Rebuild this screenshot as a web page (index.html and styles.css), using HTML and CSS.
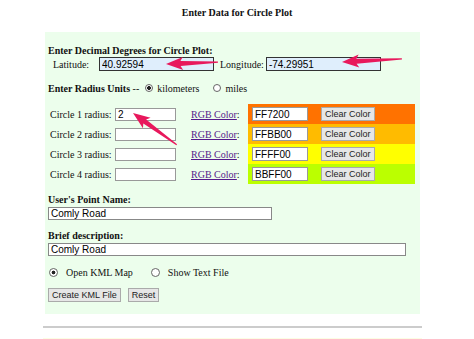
FILE: index.html
```
<!DOCTYPE html>
<html lang="en">
<head>
    <meta charset="UTF-8">
    <title>Enter Data for Circle Plot</title>
    <link rel="stylesheet" href="styles.css">
</head>
<body>
    <h1 class="title">Enter Data for Circle Plot</h1>

    <form class="panel">
        <div class="heading">Enter Decimal Degrees for Circle Plot:</div>
        <div class="coords">
            <label class="lat-label">Latitude:</label>
            <input type="text" class="coord-input" value="40.92594">
            <label class="lon-label">Longitude:</label>
            <input type="text" class="coord-input" value="-74.29951">
        </div>

        <div class="units">
            <span><b>Enter Radius Units</b> --</span>
            <input type="radio" name="units" class="radio" checked>
            <span>kilometers</span>
            <input type="radio" name="units" class="radio miles">
            <span>miles</span>
        </div>

        <div class="circles">
            <span class="circle-label">Circle 1 radius:</span>
            <input type="text" class="radius-input" value="2">
            <span><a href="#" class="rgb-link">RGB Color</a>:</span>
            <div class="color-cell" style="background:#FF7200">
                <input type="text" class="color-input" value="FF7200">
                <button type="button" class="btn">Clear Color</button>
            </div>

            <span class="circle-label">Circle 2 radius:</span>
            <input type="text" class="radius-input">
            <span><a href="#" class="rgb-link">RGB Color</a>:</span>
            <div class="color-cell" style="background:#FFBB00">
                <input type="text" class="color-input" value="FFBB00">
                <button type="button" class="btn">Clear Color</button>
            </div>

            <span class="circle-label">Circle 3 radius:</span>
            <input type="text" class="radius-input">
            <span><a href="#" class="rgb-link">RGB Color</a>:</span>
            <div class="color-cell" style="background:#FFFF00">
                <input type="text" class="color-input" value="FFFF00">
                <button type="button" class="btn">Clear Color</button>
            </div>

            <span class="circle-label">Circle 4 radius:</span>
            <input type="text" class="radius-input">
            <span><a href="#" class="rgb-link">RGB Color</a>:</span>
            <div class="color-cell" style="background:#BBFF00">
                <input type="text" class="color-input" value="BBFF00">
                <button type="button" class="btn">Clear Color</button>
            </div>
        </div>

        <div class="field-label">User's Point Name:</div>
        <input type="text" class="text-input name-input" value="Comly Road">

        <div class="field-label">Brief description:</div>
        <input type="text" class="text-input desc-input" value="Comly Road">

        <div class="output">
            <input type="radio" name="out" class="radio" checked>
            <span>Open KML Map</span>
            <input type="radio" name="out" class="radio text-file">
            <span>Show Text File</span>
        </div>

        <div class="actions">
            <button type="button" class="btn">Create KML File</button>
            <button type="button" class="btn">Reset</button>
        </div>
    </form>

    <hr class="divider">
    <div class="band"></div>

    <!-- annotation arrows drawn over the form -->
    <svg class="arrows" width="474" height="339" viewBox="0 0 474 339">
        <g fill="#e8185c">
            <path transform="translate(166 64) rotate(-2)" d="M0,0 L17,-6.5 L14.5,-2.4 L52,-0.6 L52,0.6 L14.5,2.4 L17,6.5 Z"/>
            <path transform="translate(342 62) rotate(-3)" d="M0,0 L17,-6.5 L14.5,-2.4 L60,-0.6 L60,0.6 L14.5,2.4 L17,6.5 Z"/>
            <path transform="translate(133 113) rotate(36)" d="M0,0 L17,-6.5 L14.5,-2.4 L54,-0.6 L54,0.6 L14.5,2.4 L17,6.5 Z"/>
        </g>
    </svg>
</body>
</html>
```

FILE: styles.css
```
body {
    margin: 0;
    background: #fff;
    font-family: 'Liberation Serif', serif;
    font-size: 10px;
    color: #111;
    position: relative;
    height: 339px;
    overflow: hidden;
}

.title {
    margin: 0;
    padding-top: 6px;
    height: 26px;
    font-size: 10px;
    line-height: 13px;
    text-align: center;
}

.panel {
    margin: 0 0 0 45px;
    width: 375px;
    box-sizing: border-box;
    padding: 12px 0 12px 3px;
    background: #ecfeec;
    display: flex;
    flex-direction: column;
    align-items: flex-start;
}

.heading {
    font-weight: bold;
    line-height: 13px;
    height: 13px;
}

.coords {
    display: flex;
    align-items: center;
    height: 14px;
}

.lat-label {
    margin-left: 5px;
    width: 46px;
}

.lon-label {
    margin-left: 6px;
    margin-right: 2px;
}

.coord-input {
    width: 115px;
    height: 14px;
    box-sizing: border-box;
    border: 1px solid #333;
    background: #dfeefc;
    font-family: 'Liberation Sans', sans-serif;
    font-size: 10px;
    padding: 0 2px;
    margin: 0;
}

.units {
    margin-top: 10px;
    height: 14px;
    display: flex;
    align-items: center;
}

.radio {
    appearance: none;
    width: 8px;
    height: 8px;
    margin: 0 4px 0 6px;
    border: 1px solid #666;
    border-radius: 50%;
    background: #fff;
    box-sizing: border-box;
}

.radio:checked {
    background: radial-gradient(circle, #222 0 1.6px, #fff 2.2px);
}

.miles {
    margin-left: 14px;
}

.circles {
    margin-top: 9px;
    display: grid;
    grid-template-columns: 65px 76px 57px 167px;
    grid-auto-rows: 20px;
    align-items: center;
    padding-left: 2px;
}

.radius-input {
    width: 61px;
    height: 13px;
    box-sizing: border-box;
    border: 1px solid #999;
    background: #fff;
    font-family: 'Liberation Sans', sans-serif;
    font-size: 10px;
    padding: 0 2px;
    margin: 0;
}

.rgb-link {
    color: #551a8b;
}

.color-cell {
    height: 20px;
    display: flex;
    align-items: center;
    padding-left: 4px;
}

.color-input {
    width: 56px;
    height: 14px;
    box-sizing: border-box;
    border: 1px solid #999;
    background: #fff;
    font-family: 'Liberation Sans', sans-serif;
    font-size: 10px;
    padding: 0 2px;
    margin: 0 13px 0 0;
}

.btn {
    height: 14px;
    padding: 0 3px;
    margin: 0;
    border: 1px solid #aaa;
    background: #e6e6e6;
    font-family: 'Liberation Sans', sans-serif;
    font-size: 9px;
    line-height: 12px;
    color: #222;
}

.field-label {
    margin-top: 9px;
    font-weight: bold;
    line-height: 14px;
    height: 14px;
}

.text-input {
    height: 13px;
    box-sizing: border-box;
    border: 1px solid #888;
    background: #fff;
    font-family: 'Liberation Sans', sans-serif;
    font-size: 10px;
    padding: 0 2px;
    margin: 0;
}

.name-input {
    width: 224px;
}

.desc-input {
    width: 358px;
}

.output {
    margin-top: 9px;
    height: 14px;
    display: flex;
    align-items: center;
}

.output .radio {
    width: 9px;
    height: 9px;
    margin: 0 8px 0 1px;
}

.output .text-file {
    margin-left: 18px;
}

.actions {
    margin-top: 9px;
    display: flex;
    gap: 7px;
}

.divider {
    margin: 12px 0 0 43px;
    width: 379px;
    height: 2px;
    border: none;
    background: #ccc;
}

.band {
    margin: 10px 0 0 43px;
    width: 379px;
    height: 10px;
    background: #fcfde4;
}

.arrows {
    position: absolute;
    top: 0;
    left: 0;
    pointer-events: none;
}
```
